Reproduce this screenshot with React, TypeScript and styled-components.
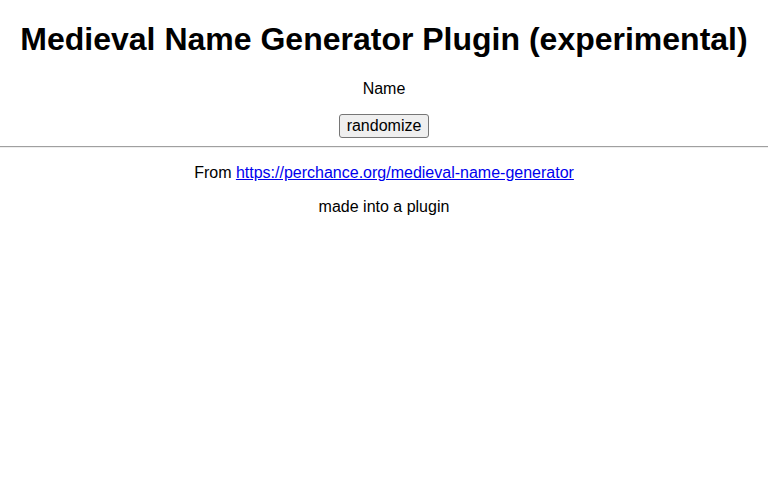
import React, { useState } from "react";
import styled, { createGlobalStyle } from "styled-components";

const GlobalStyle = createGlobalStyle`
  body {
    margin: 0;
    font-family: "Liberation Sans", Arial, sans-serif;
    font-size: 16px;
    color: #000;
    background: #fff;
  }
`;

const Page = styled.div`
  text-align: center;
`;

const Title = styled.h1`
  font-size: 32px;
  font-weight: bold;
  margin: 21.44px 0;
  line-height: normal;
`;

const Line = styled.p`
  margin: 16px 0;
  line-height: normal;
`;

const NameOutput = styled.div`
  margin: 0 0 16px;
  line-height: normal;
`;

const RandomButton = styled.button`
  font-family: "Liberation Sans", Arial, sans-serif;
  font-size: 16px;
  color: #000;
  background: #efefef;
  border: 1px solid #767676;
  border-radius: 3px;
  padding: 2px 7px;
  cursor: pointer;
  line-height: normal;
`;

const Divider = styled.hr`
  margin: 8px 0;
  border: none;
  border-top: 1px solid #a0a0a0;
  border-bottom: 1px solid #eee;
  height: 0;
`;

const Link = styled.a`
  color: #0000ee;
  text-decoration: underline;
`;

const names = ["Name", "Aldric", "Godwin", "Rowena", "Edmund", "Isolde"];

export default function App() {
  const [idx, setIdx] = useState(0);

  return (
    <Page>
      <GlobalStyle />
      <Title>Medieval Name Generator Plugin (experimental)</Title>
      <NameOutput>{names[idx]}</NameOutput>
      <RandomButton onClick={() => setIdx((idx % (names.length - 1)) + 1)}>
        randomize
      </RandomButton>
      <Divider />
      <Line>
        From{" "}
        <Link href="https://perchance.org/medieval-name-generator">
          https://perchance.org/medieval-name-generator
        </Link>
      </Line>
      <Line>made into a plugin</Line>
    </Page>
  );
}
